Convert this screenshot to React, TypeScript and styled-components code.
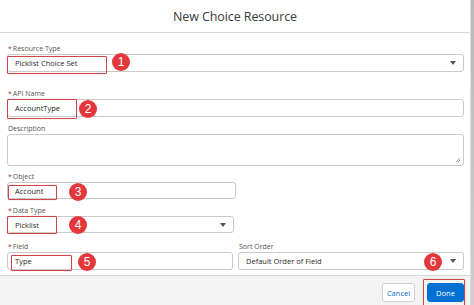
import React from "react"
import styled, { createGlobalStyle } from "styled-components"

const Global = createGlobalStyle`
  html, body {
    margin: 0;
    padding: 0;
    background: #fff;
  }
  body {
    font-family: "Open Sans", "Liberation Sans", sans-serif;
    color: #3e3e3c;
  }
`

const Frame = styled.div`
  display: flex;
  width: 474px;
  height: 305px;
  overflow: hidden;
`

const Modal = styled.div`
  width: 470px;
  height: 305px;
  display: flex;
  flex-direction: column;
  background: #fff;
  border-right: 1px solid #dcdcdc;
  overflow: hidden;
`

const Scrollbar = styled.div`
  width: 3px;
  height: 305px;
  background: linear-gradient(#b9b9b9, #cfcfcf);
`

const Header = styled.div`
  height: 33px;
  flex: none;
  display: flex;
  align-items: center;
  justify-content: center;
  border-bottom: 1px solid #d8d8d8;
  box-sizing: border-box;
  font-size: 12.5px;
  color: #3a3a3a;
  letter-spacing: -0.1px;
`

const Body = styled.div`
  height: 242px;
  flex: none;
  box-sizing: border-box;
  padding: 10px 6px 0 7px;
  display: flex;
  flex-direction: column;
`

const Field = styled.div<{ $gap?: number }>`
  display: flex;
  flex-direction: column;
  margin-bottom: ${(p) => p.$gap ?? 6}px;
`

const Label = styled.div`
  height: 11px;
  line-height: 11px;
  font-size: 7px;
  color: #545454;
  padding-left: 1px;
`

const Req = styled.span`
  color: #a13c3c;
  margin-right: 1px;
`

const Box = styled.div<{ $h?: number }>`
  position: relative;
  height: ${(p) => p.$h ?? 18}px;
  box-sizing: border-box;
  border: 1px solid #c9c9c9;
  border-radius: 3px;
  background: #fff;
  display: flex;
  align-items: center;
  padding: 0 7px;
  font-size: 7.5px;
  color: #1f1f1f;
`

const Chevron = styled.span`
  margin-left: auto;
  width: 0;
  height: 0;
  border-left: 3px solid transparent;
  border-right: 3px solid transparent;
  border-top: 4px solid #555;
`

const Grip = styled.svg`
  position: absolute;
  right: 2px;
  bottom: 2px;
`

const Half = styled.div<{ $w: number }>`
  width: ${(p) => p.$w}px;
`

const Pair = styled.div`
  display: grid;
  grid-template-columns: 226px 226px;
  column-gap: 5px;
`

const Highlight = styled.div<{ $l: number; $t: number; $w: number; $h: number }>`
  position: absolute;
  left: ${(p) => p.$l}px;
  top: ${(p) => p.$t}px;
  width: ${(p) => p.$w}px;
  height: ${(p) => p.$h}px;
  box-sizing: border-box;
  border: 1.5px solid #d2444c;
  border-radius: 1px;
  box-shadow: 0 0 1px rgba(200, 60, 60, 0.5);
  pointer-events: none;
`

const Badge = styled.div<{ $x: number; $y: number }>`
  position: absolute;
  left: ${(p) => p.$x - 9}px;
  top: ${(p) => p.$y - 9}px;
  width: 18px;
  height: 18px;
  border-radius: 50%;
  background: #e2383c;
  color: #fff;
  font-size: 12px;
  line-height: 18px;
  text-align: center;
  font-family: "Liberation Sans", Arial, sans-serif;
`

const Footer = styled.div`
  height: 30px;
  flex: none;
  border-top: 1px solid #d8d8d8;
  background: #f3f3f3;
  display: flex;
  align-items: flex-start;
  justify-content: flex-end;
  padding: 7px 6px 0 0;
  box-sizing: border-box;
  gap: 12px;
`

const Button = styled.button<{ $primary?: boolean }>`
  display: block;
  margin: 0;
  height: 19px;
  padding: 0;
  width: ${(p) => (p.$primary ? 37 : 33)}px;
  border-radius: 3px;
  font-family: "Open Sans", "Liberation Sans", sans-serif;
  font-size: 7.5px;
  border: 1px solid ${(p) => (p.$primary ? "#0070d2" : "#d0d0d0")};
  background: ${(p) => (p.$primary ? "#0070d2" : "#fff")};
  color: ${(p) => (p.$primary ? "#fff" : "#0070d2")};
`

const DoneWrap = styled.div`
  position: relative;
`

export default function App() {
  return (
    <Frame>
      <Global />
      <Modal>
        <Header>New Choice Resource</Header>
        <Body>
          <Field $gap={16}>
            <Label>
              <Req>*</Req>Resource Type
            </Label>
            <Box>
              Picklist Choice Set
              <Chevron />
              <Highlight $l={-1} $t={1} $w={100} $h={18} />
              <Badge $x={113} $y={7}>1</Badge>
            </Box>
          </Field>
          <Field>
            <Label>
              <Req>*</Req>API Name
            </Label>
            <Box>
              AccountType
              <Highlight $l={-1} $t={-1} $w={70} $h={20} />
              <Badge $x={80} $y={9}>2</Badge>
            </Box>
          </Field>
          <Field $gap={5}>
            <Label>Description</Label>
            <Box $h={32}>
              <Grip width="6" height="6" viewBox="0 0 6 6">
                <path d="M1 5 L5 1 M3 5 L5 3" stroke="#888" strokeWidth="0.8" />
              </Grip>
            </Box>
          </Field>
          <Field>
            <Half $w={229}>
              <Label>
                <Req>*</Req>Object
              </Label>
              <Box $h={17}>
                Account
                <Highlight $l={0} $t={2} $w={49} $h={15} />
                <Badge $x={70} $y={9}>3</Badge>
              </Box>
            </Half>
          </Field>
          <Field $gap={8}>
            <Half $w={227}>
              <Label>
                <Req>*</Req>Data Type
              </Label>
              <Box $h={17}>
                Picklist
                <Chevron />
                <Highlight $l={-1} $t={-1} $w={50} $h={18} />
                <Badge $x={70} $y={8}>4</Badge>
              </Box>
            </Half>
          </Field>
          <Pair>
            <div>
              <Label>
                <Req>*</Req>Field
              </Label>
              <Box $h={18}>
                Type
                <Highlight $l={3} $t={2} $w={61} $h={16} />
                <Badge $x={79} $y={9}>5</Badge>
              </Box>
            </div>
            <div>
              <Label>Sort Order</Label>
              <Box $h={18}>
                Default Order of Field
                <Chevron />
                <Badge $x={194} $y={9}>6</Badge>
              </Box>
            </div>
          </Pair>
        </Body>
        <Footer>
          <Button>Cancel</Button>
          <DoneWrap>
            <Button $primary>Done</Button>
            <Highlight $l={-4} $t={-4} $w={42} $h={30} />
          </DoneWrap>
        </Footer>
      </Modal>
      <Scrollbar />
    </Frame>
  )
}
